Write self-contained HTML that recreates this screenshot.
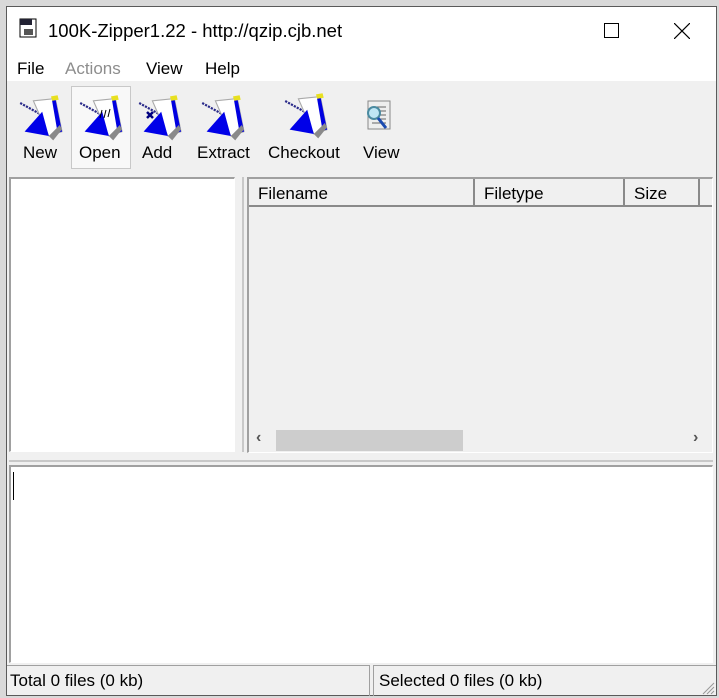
<!DOCTYPE html>
<html><head><meta charset="utf-8"><style>
*{margin:0;padding:0;box-sizing:border-box}
body{width:719px;height:698px;background:#d9d9d9;position:relative;overflow:hidden;font-family:"Liberation Sans",sans-serif;font-size:17px;color:#000}
.win{position:absolute;left:6px;top:6px;width:711px;height:690px;background:#f0f0f0;border:1px solid #5a5a5a}
.abs{position:absolute}
.title{left:0;top:0;width:709px;height:74px;background:#fff}
.t{position:absolute;white-space:nowrap}
.sunk{border-top:2px solid #a0a0a0;border-left:2px solid #a0a0a0;border-right:1px solid #fff;border-bottom:1px solid #fff}
.hdr{position:absolute;top:0;height:28px;border-right:2px solid #8a8a8a;border-bottom:2px solid #8a8a8a;background:#f0f0f0;padding:5px 0 0 9px}
</style></head><body>
<svg width="0" height="0" style="position:absolute"><defs>
<g id="ic" transform="scale(1.1)">
<path d="M2 10 L20 20" stroke="#2a2a8a" stroke-width="2" stroke-dasharray="2 1"/>
<path d="M14 8 L34 6 L40 36 L28 40 Z" fill="#fff" stroke="#aaa" stroke-width="1"/>
<path d="M34 6 L40 36 L36 37 L31 8 Z" fill="#0000e0"/>
<path d="M30 4 L36 3 L37 7 L31 8 Z" fill="#e8e020"/>
<path d="M6 36 L22 18 L28 40 Z" fill="#0000e8"/>
<path d="M28 40 L38 30 L40 34 L32 44 Z" fill="#8a8a8a"/>
</g></defs></svg>
<div class="win">
<div class="abs title"></div>
<svg class="abs" style="left:12px;top:11px" width="18" height="20"><rect x="1" y="1" width="16" height="18" fill="#fff" stroke="#000"/><rect x="1" y="1" width="12" height="6" fill="#223"/><rect x="5" y="11" width="9" height="6" fill="#555"/></svg>
<div class="t" style="left:41px;top:13px;font-size:18.5px">100K-Zipper1.22 - http://qzip.cjb.net</div>
<div class="abs" style="left:597px;top:16px;width:15px;height:15px;border:1px solid #000"></div>
<svg class="abs" style="left:667px;top:16px" width="16" height="16"><path d="M0 0L16 16M16 0L0 16" stroke="#000" stroke-width="1.2"/></svg>
<div class="t" style="left:10px;top:52px">File</div>
<div class="t" style="left:58px;top:52px;color:#8d8d8d">Actions</div>
<div class="t" style="left:139px;top:52px">View</div>
<div class="t" style="left:198px;top:52px">Help</div>
<div class="abs" style="left:64px;top:79px;width:60px;height:83px;background:#f8f8f8;border:1px solid #c8c8c8"></div>
<svg class="abs" style="left:11px;top:85px" width="48" height="50"><use href="#ic"/></svg>
<svg class="abs" style="left:71px;top:85px" width="48" height="50"><use href="#ic"/><path d="M24 18l-2 8M28 18l-2 8M32 17l-2 8" stroke="#000"/></svg>
<svg class="abs" style="left:130px;top:85px" width="48" height="50"><use href="#ic"/><path d="M10 20l6 6M16 20l-6 6" stroke="#000080" stroke-width="2.5"/></svg>
<svg class="abs" style="left:193px;top:85px" width="48" height="50"><use href="#ic"/></svg>
<svg class="abs" style="left:276px;top:83px" width="48" height="50"><use href="#ic"/></svg>
<svg class="abs" style="left:355px;top:92px" width="34" height="40"><rect x="6" y="2" width="22" height="28" fill="#eee" stroke="#888"/><path d="M10 8h14M10 12h14M10 16h14M10 20h14M10 24h14" stroke="#666"/><circle cx="12" cy="14" r="6" fill="#bfe6f5" stroke="#4a8aa0" stroke-width="2"/><path d="M16 19l8 10" stroke="#1a4ab0" stroke-width="3"/></svg>
<div class="t" style="left:16px;top:136px">New</div>
<div class="t" style="left:72px;top:136px">Open</div>
<div class="t" style="left:135px;top:136px">Add</div>
<div class="t" style="left:190px;top:136px">Extract</div>
<div class="t" style="left:261px;top:136px">Checkout</div>
<div class="t" style="left:356px;top:136px">View</div>
<div class="abs sunk" style="left:2px;top:170px;width:226px;height:275px;background:#fff"></div>
<div class="abs" style="left:235px;top:170px;width:2px;height:275px;background:#c8c8c8"></div>
<div class="abs sunk" style="left:240px;top:170px;width:466px;height:276px;background:#f0f0f0;overflow:hidden">
<div class="hdr" style="left:0;width:226px">Filename</div>
<div class="hdr" style="left:226px;width:150px">Filetype</div>
<div class="hdr" style="left:376px;width:75px">Size</div>
<div class="hdr" style="left:451px;width:30px"></div>
<div class="abs" style="left:0;top:250px;width:464px;height:23px;background:#f0f0f0"></div>
<div class="abs" style="left:27px;top:251px;width:187px;height:21px;background:#cdcdcd"></div>
<div class="t" style="left:7px;top:250px;font-size:16px;font-weight:bold;color:#555">‹</div>
<div class="t" style="left:444px;top:250px;font-size:16px;font-weight:bold;color:#555">›</div>
</div>
<div class="abs" style="left:2px;top:453px;width:704px;height:2px;background:#c8c8c8"></div>
<div class="abs sunk" style="left:2px;top:458px;width:704px;height:198px;background:#fff"></div>
<div class="abs" style="left:6px;top:465px;width:1px;height:28px;background:#000"></div>
<div class="abs" style="left:0;top:658px;width:363px;height:31px;border-top:1px solid #a0a0a0;border-right:1px solid #a0a0a0"></div>
<div class="abs" style="left:366px;top:658px;width:343px;height:31px;border-top:1px solid #a0a0a0;border-left:1px solid #a0a0a0"></div>
<div class="t" style="left:3px;top:664px">Total 0 files (0 kb)</div>
<div class="t" style="left:372px;top:664px">Selected 0 files (0 kb)</div>
<svg class="abs" style="left:694px;top:674px" width="14" height="14"><path d="M13 2L2 13M13 6L6 13M13 10L10 13" stroke="#999"/></svg>
</div>
</body></html>
